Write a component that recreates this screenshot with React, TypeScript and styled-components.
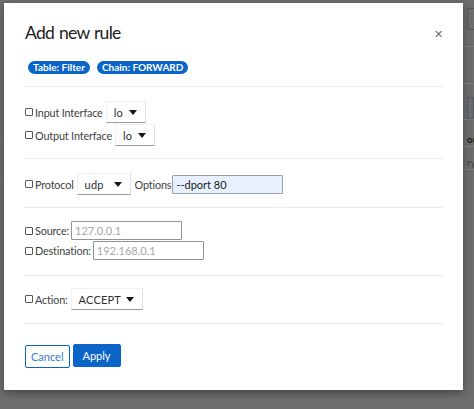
import React from "react";
import styled, { createGlobalStyle } from "styled-components";

const GlobalStyle = createGlobalStyle`
  html, body {
    margin: 0;
    padding: 0;
    background: #6d6d6d;
    font-family: Lato, "Liberation Sans", sans-serif;
  }
`;

const Page = styled.div`
  width: 474px;
  height: 409px;
  display: flex;
  overflow: hidden;
  background: #6d6d6d;
`;

const LeftGutter = styled.div`
  width: 4px;
  flex: none;
  display: flex;
  flex-direction: column;
  padding-top: 105px;
`;

const GhostLine = styled.div<{ h: number }>`
  height: ${({ h }) => h}px;
  border-bottom: 1px solid #7a7a7a;
`;

const Modal = styled.div`
  width: 459px;
  height: 387px;
  margin-top: 3px;
  flex: none;
  background: #fff;
  box-shadow: 0 3px 8px rgba(0, 0, 0, 0.35);
  padding: 0 20px;
  box-sizing: border-box;
  display: flex;
  flex-direction: column;
`;

const Header = styled.div`
  display: flex;
  align-items: flex-start;
  justify-content: space-between;
  padding: 19px 0 0 1px;
`;

const Title = styled.h1`
  margin: 0;
  font-size: 17.5px;
  font-weight: 400;
  letter-spacing: -0.7px;
  word-spacing: 1px;
  color: #1b1b1b;
`;

const Close = styled.button`
  border: none;
  background: none;
  color: #6a6e73;
  font-size: 11px;
  padding: 0;
  margin: 5px 0 0 0;
  line-height: 14px;
  cursor: pointer;
`;

const Badges = styled.div`
  display: flex;
  gap: 7px;
  padding: 18px 0 12px 4px;
`;

const Badge = styled.span`
  background: #0b64c8;
  color: #fff;
  font-size: 10px;
  font-weight: 700;
  border-radius: 8px;
  padding: 0 5px;
  height: 13px;
  line-height: 13px;
`;

const Divider = styled.hr`
  border: none;
  border-top: 1px solid #ececec;
  margin: 0;
  width: 419px;
`;

const Section = styled.div<{ pt: number; pb: number; gap?: number }>`
  display: flex;
  flex-direction: column;
  gap: ${({ gap }) => gap ?? 1}px;
  padding: ${({ pt }) => pt}px 0 ${({ pb }) => pb}px 1px;
`;

const Row = styled.div`
  display: flex;
  align-items: center;
  font-size: 10.8px;
  letter-spacing: -0.15px;
  color: #3c3f42;
`;

const Check = styled.input.attrs({ type: "checkbox" })`
  width: 8px;
  height: 8px;
  margin: 0 2px 0 0;
  appearance: none;
  border: 1px solid #555;
  border-radius: 1px;
  flex: none;
`;

const Label = styled.span<{ mr?: number; ml?: number }>`
  margin-right: ${({ mr }) => mr ?? 2}px;
  margin-left: ${({ ml }) => ml ?? 0}px;
`;

const Select = styled.div<{ w: number }>`
  width: ${({ w }) => w}px;
  height: 22px;
  flex: none;
  box-sizing: border-box;
  border: 1px solid #f1f1f1;
  border-bottom-color: #9a9c9f;
  border-right-color: #e0e0e0;
  display: flex;
  align-items: center;
  justify-content: space-between;
  padding: 0 8px 0 7px;
  font-size: 11px;
  color: #2d2f31;
  letter-spacing: 0.2px;
`;

const Caret = styled.span`
  width: 0;
  height: 0;
  border-left: 4px solid transparent;
  border-right: 4px solid transparent;
  border-top: 5px solid #151515;
`;

const TextInput = styled.input<{ filled?: boolean }>`
  width: 111px;
  height: 19px;
  flex: none;
  box-sizing: border-box;
  border: 1px solid ${({ filled }) => (filled ? "#9a9ea5" : "#8f9296")};
  border-radius: 1px;
  background: ${({ filled }) => (filled ? "#e8f0fe" : "#fff")};
  font-family: inherit;
  font-size: 11px;
  color: #1a1a1a;
  padding: 0 3px;
  outline: none;
  &::placeholder {
    color: #a4a6a8;
  }
`;

const Footer = styled.div`
  display: flex;
  gap: 3px;
  padding: 20px 0 0 1px;
  align-items: center;
`;

const Button = styled.button<{ primary?: boolean }>`
  font-family: inherit;
  font-size: 11px;
  height: 23px;
  border-radius: 2px;
  padding: 0 ${({ primary }) => (primary ? 9 : 5)}px;
  border: 1px solid #0b64c8;
  background: ${({ primary }) => (primary ? "#0b64c8" : "#fff")};
  color: ${({ primary }) => (primary ? "#fff" : "#3a7cc9")};
  margin-top: ${({ primary }) => (primary ? -1 : 1)}px;
`;

const RightStrip = styled.div`
  flex: 1;
  display: flex;
  flex-direction: column;
  padding-top: 8px;
  padding-left: 4px;
  font-size: 10px;
  overflow: hidden;
`;

const GhostButton = styled.div`
  width: 12px;
  height: 22px;
  border: 1px solid #4c5560;
  border-radius: 2px;
  box-sizing: border-box;
`;

const GhostRow = styled.div<{ h: number }>`
  height: ${({ h }) => h}px;
  border-bottom: 1px solid #787878;
  margin-left: -4px;
  display: flex;
  align-items: flex-end;
  padding-left: 4px;
`;

const GhostText = styled.span<{ light?: boolean }>`
  font-weight: ${({ light }) => (light ? 400 : 700)};
  color: ${({ light }) => (light ? "#3e3e3e" : "#151515")};
  white-space: nowrap;
  line-height: 14px;
`;

export default function App() {
  return (
    <>
      <GlobalStyle />
      <Page>
        <LeftGutter>
          <GhostLine h={36} />
          <GhostLine h={36} />
        </LeftGutter>
        <Modal>
          <Header>
            <Title>Add new rule</Title>
            <Close aria-label="Close">✕</Close>
          </Header>
          <Badges>
            <Badge>Table: Filter</Badge>
            <Badge>Chain: FORWARD</Badge>
          </Badges>
          <Divider />
          <Section pt={14} pb={12}>
            <Row>
              <Check />
              <Label mr={3}>Input Interface</Label>
              <Select w={40}>
                lo <Caret />
              </Select>
            </Row>
            <Row>
              <Check />
              <Label mr={3}>Output Interface</Label>
              <Select w={40}>
                lo <Caret />
              </Select>
            </Row>
          </Section>
          <Divider />
          <Section pt={14} pb={12}>
            <Row>
              <Check />
              <Label mr={3}>Protocol</Label>
              <Select w={54}>
                udp <Caret />
              </Select>
              <Label mr={1} ml={4}>Options</Label>
              <TextInput filled defaultValue="--dport 80" />
            </Row>
          </Section>
          <Divider />
          <Section pt={13} pb={15} gap={1}>
            <Row>
              <Check />
              <Label>Source:</Label>
              <TextInput placeholder="127.0.0.1" />
            </Row>
            <Row>
              <Check />
              <Label>Destination:</Label>
              <TextInput placeholder="192.168.0.1" />
            </Row>
          </Section>
          <Divider />
          <Section pt={12} pb={13}>
            <Row>
              <Check />
              <Label mr={3}>Action:</Label>
              <Select w={72}>
                ACCEPT <Caret />
              </Select>
            </Row>
          </Section>
          <Divider />
          <Footer>
            <Button>Cancel</Button>
            <Button primary>Apply</Button>
          </Footer>
        </Modal>
        <RightStrip>
          <GhostButton />
          <GhostRow h={16} />
          <GhostRow h={36} />
          <GhostRow h={35}>
            <GhostButton />
          </GhostRow>
          <GhostRow h={26}>
            <GhostText>our</GhostText>
          </GhostRow>
          <GhostRow h={22}>
            <GhostText light>ryv</GhostText>
          </GhostRow>
        </RightStrip>
      </Page>
    </>
  );
}
